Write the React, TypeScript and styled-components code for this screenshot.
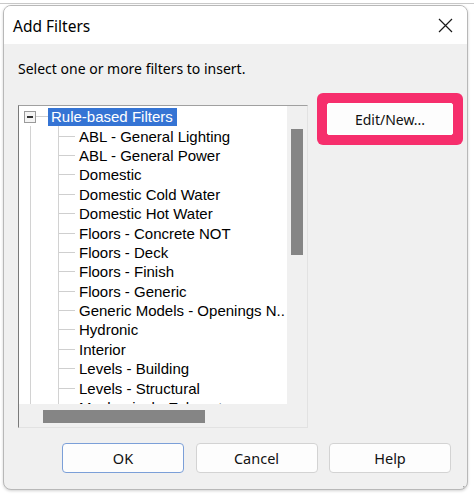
import React from "react";
import styled, { createGlobalStyle } from "styled-components";

const GlobalStyle = createGlobalStyle`
  body {
    margin: 0;
    background: #ffffff;
  }
`;

const Page = styled.div`
  width: 474px;
  height: 494px;
  box-sizing: border-box;
  padding: 5px 6px 4px 3px;
  background: linear-gradient(#ffffff 3px, #c9c9c9 3px, #c9c9c9 4px, #ffffff 4px);
`;

const Window = styled.div`
  width: 465px;
  height: 485px;
  box-sizing: border-box;
  border: 1px solid #b8b8b8;
  border-radius: 8px;
  overflow: hidden;
  display: flex;
  flex-direction: column;
  background: #f0f0f0;
  box-shadow: 0 1px 3px rgba(0, 0, 0, 0.18);
  font-family: "Noto Sans", "Open Sans", sans-serif;
  color: #000;
`;

const TitleBar = styled.div`
  height: 38px;
  flex: none;
  background: #ffffff;
  display: flex;
  align-items: center;
  justify-content: space-between;
  padding: 0 14px 0 9px;
`;

const Title = styled.div`
  font-size: 15.5px;
  margin-top: 1px;
`;

const CloseButton = styled.div`
  width: 16px;
  height: 16px;
  display: flex;
  align-items: center;
  justify-content: center;
`;

const Body = styled.div`
  flex: 1;
  display: flex;
  flex-direction: column;
  padding: 15px 15px 0 14px;
  position: relative;
`;

const Prompt = styled.div`
  font-size: 14px;
  line-height: 20px;
`;

const Main = styled.div`
  margin-top: 14px;
  display: flex;
  align-items: flex-start;
`;

const ListBox = styled.div`
  margin-top: 12px;
  width: 290px;
  height: 323px;
  box-sizing: border-box;
  border-top: 1px solid #a0a0a0;
  border-left: 1px solid #7a7a7a;
  border-right: 1px solid #e2e2e2;
  border-bottom: 1px solid #e2e2e2;
  display: grid;
  grid-template-columns: 268px 20px;
  grid-template-rows: 298px 22px;
  background: #f0f0f0;
`;

const Viewport = styled.div`
  background: #ffffff;
  overflow: hidden;
  padding-top: 1px;
  font-family: "Liberation Sans", Arial, sans-serif;
  font-size: 15px;
  white-space: nowrap;
`;

const RootRow = styled.div`
  height: 19.4px;
  display: flex;
  align-items: center;
`;

const Expander = styled.div`
  margin-left: 5px;
  width: 12px;
  height: 12px;
  box-sizing: border-box;
  border: 1px solid #9a9a9a;
  background: #f4f4f4;
  display: flex;
  align-items: center;
  justify-content: center;
  &::after {
    content: "";
    width: 6px;
    height: 2px;
    background: #333;
  }
`;

const Connector = styled.div<{ $width: number }>`
  width: ${(p) => p.$width}px;
  height: 1px;
  background: #cfcfcf;
`;

const Selected = styled.div`
  background: #3574d4;
  color: #ffffff;
  height: 18px;
  line-height: 18px;
  padding: 0 4px 0 3px;
`;

const RootBranch = styled.div`
  margin-left: 11px;
  border-left: 1px solid #d2d2d2;
`;

const ChildBranch = styled.div`
  margin-left: 27px;
  border-left: 1px solid #d2d2d2;
`;

const ChildRow = styled.div`
  height: 19.4px;
  display: flex;
  align-items: center;
`;

const ItemLabel = styled.span`
  margin-left: 4px;
`;

const Track = styled.div`
  background: #f0f0f0;
  position: relative;
`;

const VThumb = styled.div<{ $top: number; $height: number }>`
  position: absolute;
  left: 4px;
  width: 12px;
  top: ${(p) => p.$top}px;
  height: ${(p) => p.$height}px;
  background: #858585;
`;

const HThumb = styled.div<{ $left: number; $width: number }>`
  position: absolute;
  top: 6px;
  height: 13px;
  left: ${(p) => p.$left}px;
  width: ${(p) => p.$width}px;
  background: #858585;
`;

const Side = styled.div`
  margin-left: 9px;
`;

const Highlight = styled.div`
  padding: 10px;
  background: #f62e6c;
  border-radius: 6px;
`;

const Button = styled.button<{ $default?: boolean }>`
  width: 122px;
  height: 30px;
  box-sizing: border-box;
  background: #fdfdfd;
  border: 1px solid ${(p) => (p.$default ? "#7b9fd8" : "#d3d3d3")};
  border-radius: 4px;
  font-family: "Noto Sans", "Open Sans", sans-serif;
  font-size: 14.5px;
  color: #111;
  padding: 0;
`;

const EditButton = styled(Button)`
  width: 126px;
  height: 32px;
  border-color: #ffffff;
  border-radius: 2px;
  font-size: 14px;
`;

const Footer = styled.div`
  margin-top: 15px;
  display: flex;
  justify-content: flex-end;
  gap: 11.5px;
  padding-right: 1px;
`;

const Grip = styled.div`
  position: absolute;
  right: 2px;
  bottom: 2px;
  width: 10px;
  height: 10px;
`;

const items = [
  "ABL - General Lighting",
  "ABL - General Power",
  "Domestic",
  "Domestic Cold Water",
  "Domestic Hot Water",
  "Floors - Concrete NOT",
  "Floors - Deck",
  "Floors - Finish",
  "Floors - Generic",
  "Generic Models - Openings N..",
  "Hydronic",
  "Interior",
  "Levels - Building",
  "Levels - Structural",
  "Mechanical - Exhaust",
];

const App: React.FC = () => {
  return (
    <>
      <GlobalStyle />
      <Page>
        <Window>
          <TitleBar>
            <Title>Add Filters</Title>
            <CloseButton>
              <svg width="15" height="15" viewBox="0 0 15 15">
                <path d="M1 1 L14 14 M14 1 L1 14" stroke="#1a1a1a" strokeWidth="1.2" />
              </svg>
            </CloseButton>
          </TitleBar>
          <Body>
            <Prompt>Select one or more filters to insert.</Prompt>
            <Main>
              <ListBox>
                <Viewport>
                  <RootRow>
                    <Expander />
                    <Connector $width={12} />
                    <Selected>Rule-based Filters</Selected>
                  </RootRow>
                  <RootBranch>
                    <ChildBranch>
                      {items.map((item) => (
                        <ChildRow key={item}>
                          <Connector $width={16} />
                          <ItemLabel>{item}</ItemLabel>
                        </ChildRow>
                      ))}
                    </ChildBranch>
                  </RootBranch>
                </Viewport>
                <Track>
                  <VThumb $top={23} $height={126} />
                </Track>
                <Track>
                  <HThumb $left={24} $width={162} />
                </Track>
                <Track />
              </ListBox>
              <Side>
                <Highlight>
                  <EditButton>Edit/New...</EditButton>
                </Highlight>
              </Side>
            </Main>
            <Footer>
              <Button $default>OK</Button>
              <Button>Cancel</Button>
              <Button>Help</Button>
            </Footer>
            <Grip>
              <svg width="10" height="10" viewBox="0 0 10 10">
                <rect x="8" y="2" width="1.5" height="1.5" fill="#a8a8a8" />
                <rect x="5" y="5" width="1.5" height="1.5" fill="#a8a8a8" />
                <rect x="8" y="5" width="1.5" height="1.5" fill="#a8a8a8" />
                <rect x="2" y="8" width="1.5" height="1.5" fill="#a8a8a8" />
                <rect x="5" y="8" width="1.5" height="1.5" fill="#a8a8a8" />
                <rect x="8" y="8" width="1.5" height="1.5" fill="#a8a8a8" />
              </svg>
            </Grip>
          </Body>
        </Window>
      </Page>
    </>
  );
};

export default App;
